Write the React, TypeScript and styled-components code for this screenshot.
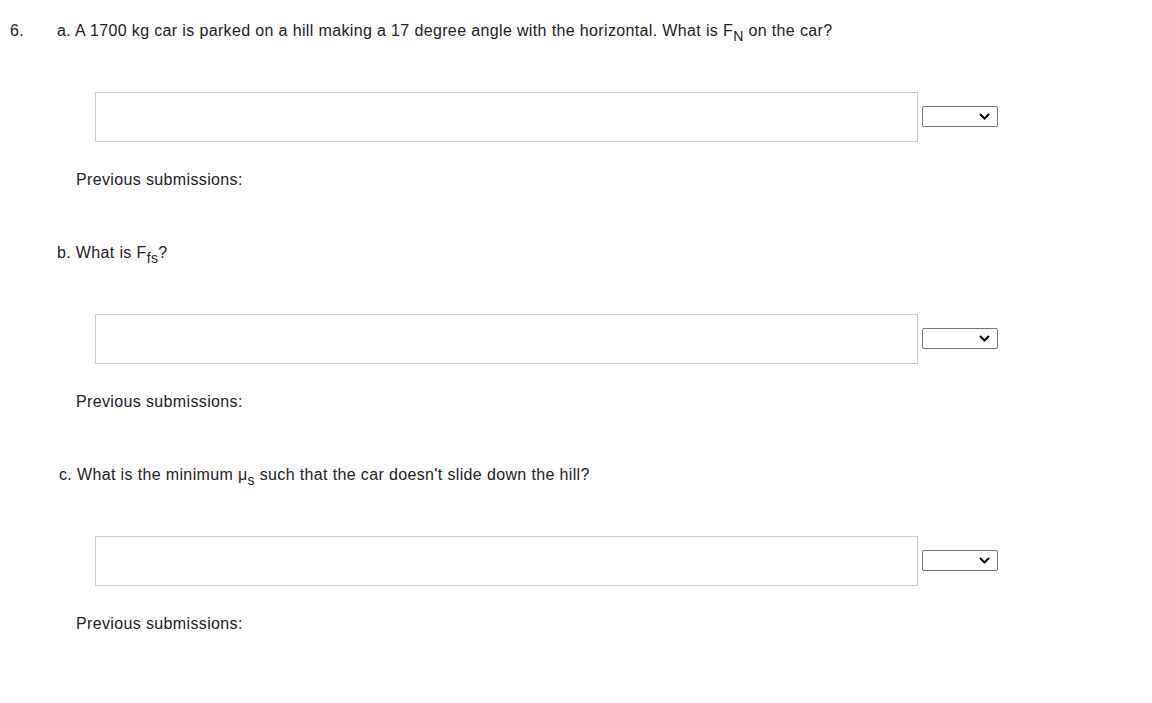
import styled, { createGlobalStyle } from "styled-components";

const GlobalStyle = createGlobalStyle`
  body {
    margin: 0;
    background: #ffffff;
    font-family: Arial, "Liberation Sans", sans-serif;
    color: #222222;
  }
`;

// layout
const Page = styled.div`
  display: flex;
  padding: 22px 0 0 10px;
  font-size: 16px;
  line-height: 18px;
  letter-spacing: 0.36px;
`;

const Number = styled.div`
  width: 47px;
  flex-shrink: 0;
`;

const Parts = styled.div`
  display: flex;
  flex-direction: column;
`;

const Part = styled.div`
  display: flex;
  flex-direction: column;
  margin-bottom: 55px;
`;

const Question = styled.div<{ $shift?: number }>`
  padding-left: ${(p) => p.$shift ?? 0}px;
  white-space: nowrap;
  height: 18px;
`;

const Sub = styled.sub`
  font-size: 14px;
  vertical-align: -5px;
  line-height: 0;
`;

const AnswerRow = styled.div`
  display: flex;
  align-items: center;
  gap: 4px;
  margin: 52px 0 0 38px;
`;

const AnswerInput = styled.input`
  box-sizing: border-box;
  width: 823px;
  height: 50px;
  border: 1px solid #cccccc;
  border-radius: 0;
  outline: none;
  padding: 0 8px;
  font: inherit;
`;

const SelectBox = styled.div`
  position: relative;
  box-sizing: border-box;
  width: 76px;
  height: 21px;
  margin-top: -2px;
  border: 1px solid #767676;
  border-radius: 2px;
  background: #ffffff;
`;

const Chevron = styled.svg`
  position: absolute;
  right: 7px;
  top: 6px;
`;

const Previous = styled.div`
  margin: 29px 0 0 19px;
  height: 18px;
`;

// data
const parts = [
  {
    shift: 0,
    text: (
      <>
        a. A 1700 kg car is parked on a hill making a 17 degree angle with the
        horizontal. What is F<Sub>N</Sub> on the car?
      </>
    ),
  },
  {
    shift: 0,
    text: (
      <>
        b. What is F<Sub>fs</Sub>?
      </>
    ),
  },
  {
    shift: 2,
    text: (
      <>
        c. What is the minimum μ<Sub>s</Sub> such that the car doesn't slide
        down the hill?
      </>
    ),
  },
];

export default function App() {
  return (
    <>
      <GlobalStyle />
      <Page>
        <Number>6.</Number>
        <Parts>
          {parts.map((part, i) => (
            <Part key={i}>
              <Question $shift={part.shift}>{part.text}</Question>
              <AnswerRow>
                <AnswerInput type="text" />
                <SelectBox>
                  <Chevron width="11" height="7" viewBox="0 0 11 7">
                    <path
                      d="M1 1 L5.5 5.5 L10 1"
                      fill="none"
                      stroke="#000"
                      strokeWidth="2"
                    />
                  </Chevron>
                </SelectBox>
              </AnswerRow>
              <Previous>Previous submissions:</Previous>
            </Part>
          ))}
        </Parts>
      </Page>
    </>
  );
}
